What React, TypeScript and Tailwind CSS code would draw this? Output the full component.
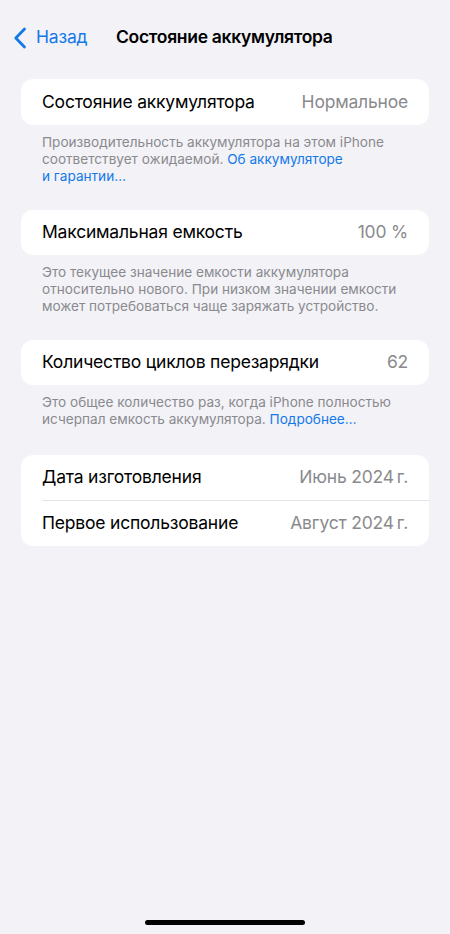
type Row = { label: string; value: string };

function Card({ rows }: { rows: Row[] }) {
  return (
    <div className="mx-[21px] rounded-[12px] bg-white">
      {rows.map((r, i) => (
        <div key={r.label} className="pl-[21px]">
          <div
            className={[
              "flex h-[45.5px] items-center justify-between pr-[21px]",
              i > 0 ? "border-t border-[#e3e3e8]" : "",
            ].join(" ")}
          >
            <span className="text-[17.5px] tracking-[-0.2px] text-black">{r.label}</span>
            <span className="text-[17.5px] tracking-[-0.2px] text-[#8a8a8e]">{r.value}</span>
          </div>
        </div>
      ))}
    </div>
  );
}

function Footer({ children }: { children: React.ReactNode }) {
  return (
    <p className="mt-[9px] px-[42px] text-[13.6px] leading-[17px] text-[#8a8a8e]">{children}</p>
  );
}

function Link({ children }: { children: React.ReactNode }) {
  return <span className="text-[#1479e8]">{children}</span>;
}

function BackChevron() {
  return (
    <svg width="14" height="22" viewBox="0 0 14 22" fill="none" className="shrink-0">
      <path
        d="M11.5 2 L2.8 11 L11.5 20"
        stroke="currentColor"
        strokeWidth="2.8"
        strokeLinecap="round"
        strokeLinejoin="round"
      />
    </svg>
  );
}

export default function App() {
  return (
    <div
      className="relative min-h-[934px] w-full bg-[#f2f2f7]"
      style={{ fontFamily: "Inter, 'Noto Sans', sans-serif" }}
    >
      {/* навигация */}
      <div className="flex h-[76px] items-center pb-[1px]">
        <div className="flex w-[116px] shrink-0 items-center pl-[13px] text-[#1479e8]">
          <BackChevron />
          <span className="ml-[9px] text-[17.5px] tracking-[-0.2px]">Назад</span>
        </div>
        <div className="text-[17.5px] font-semibold tracking-[-0.3px] text-black">
          Состояние аккумулятора
        </div>
      </div>

      <div className="pt-[3px]">
        <Card rows={[{ label: "Состояние аккумулятора", value: "Нормальное" }]} />
        <Footer>
          Производительность аккумулятора на этом iPhone соответствует ожидаемой.{" "}
          <Link>Об аккумуляторе</Link>
          <br />
          <Link>и гарантии…</Link>
        </Footer>

        <div className="mt-[25px]">
          <Card rows={[{ label: "Максимальная емкость", value: "100 %" }]} />
        </div>
        <Footer>
          Это текущее значение емкости аккумулятора относительно нового. При низком значении
          емкости может потребоваться чаще заряжать устройство.
        </Footer>

        <div className="mt-[24.5px]">
          <Card rows={[{ label: "Количество циклов перезарядки", value: "62" }]} />
        </div>
        <Footer>
          Это общее количество раз, когда iPhone полностью исчерпал емкость аккумулятора.{" "}
          <Link>Подробнее…</Link>
        </Footer>

        <div className="mt-[26.5px]">
          <Card
            rows={[
              { label: "Дата изготовления", value: "Июнь 2024\u2009г." },
              { label: "Первое использование", value: "Август 2024\u2009г." },
            ]}
          />
        </div>
      </div>

      <div className="absolute bottom-[9px] left-1/2 h-[5px] w-[160px] -translate-x-1/2 rounded-full bg-black" />
    </div>
  );
}
